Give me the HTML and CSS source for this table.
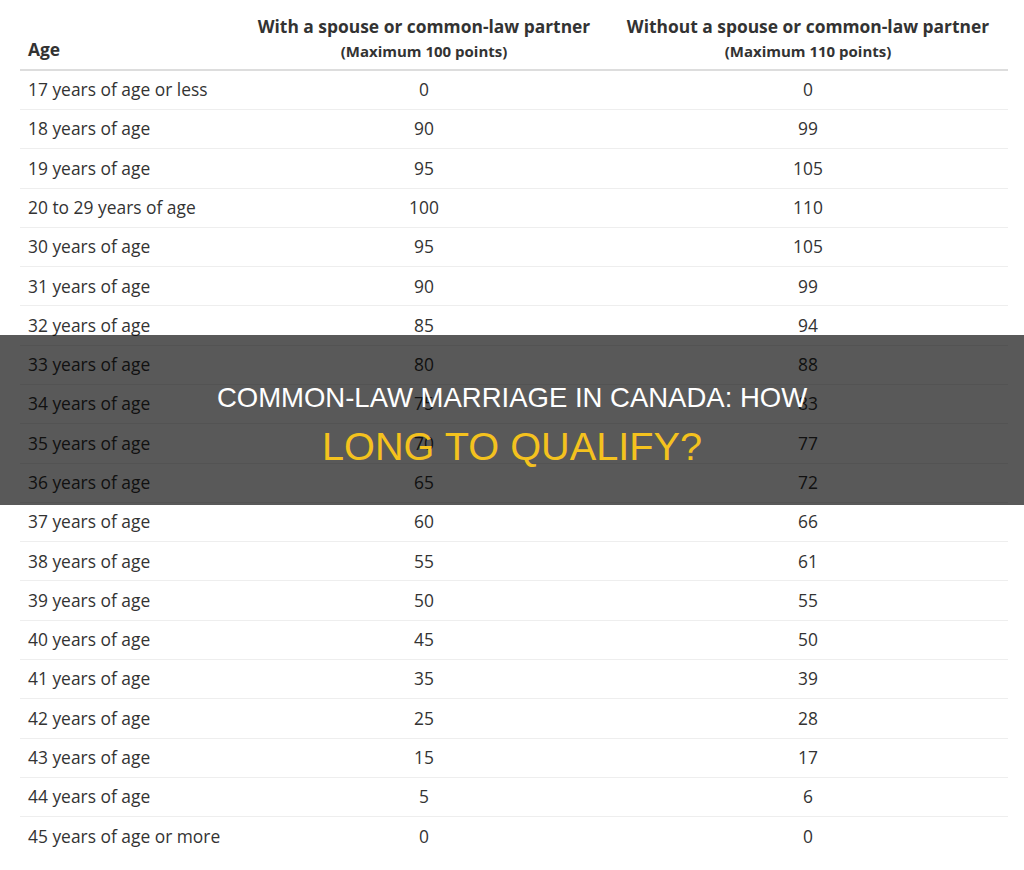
FILE: index.html
```html
<!DOCTYPE html>
<html lang="en">
<head>
<meta charset="utf-8">
<title>Common-Law Marriage In Canada: How Long To Qualify?</title>
<link rel="stylesheet" href="styles.css">
</head>
<body>
<table class="points">
  <thead>
    <tr>
      <th class="c-age">Age</th>
      <th class="c-with"><span class="h-main">With a spouse or common-law partner</span><span class="h-sub">(Maximum 100 points)</span></th>
      <th class="c-without"><span class="h-main">Without a spouse or common-law partner</span><span class="h-sub">(Maximum 110 points)</span></th>
    </tr>
  </thead>
  <tbody>
    <tr><td>17 years of age or less</td><td>0</td><td>0</td></tr>
    <tr><td>18 years of age</td><td>90</td><td>99</td></tr>
    <tr><td>19 years of age</td><td>95</td><td>105</td></tr>
    <tr><td>20 to 29 years of age</td><td>100</td><td>110</td></tr>
    <tr><td>30 years of age</td><td>95</td><td>105</td></tr>
    <tr><td>31 years of age</td><td>90</td><td>99</td></tr>
    <tr><td>32 years of age</td><td>85</td><td>94</td></tr>
    <tr><td>33 years of age</td><td>80</td><td>88</td></tr>
    <tr><td>34 years of age</td><td>75</td><td>83</td></tr>
    <tr><td>35 years of age</td><td>70</td><td>77</td></tr>
    <tr><td>36 years of age</td><td>65</td><td>72</td></tr>
    <tr><td>37 years of age</td><td>60</td><td>66</td></tr>
    <tr><td>38 years of age</td><td>55</td><td>61</td></tr>
    <tr><td>39 years of age</td><td>50</td><td>55</td></tr>
    <tr><td>40 years of age</td><td>45</td><td>50</td></tr>
    <tr><td>41 years of age</td><td>35</td><td>39</td></tr>
    <tr><td>42 years of age</td><td>25</td><td>28</td></tr>
    <tr><td>43 years of age</td><td>15</td><td>17</td></tr>
    <tr><td>44 years of age</td><td>5</td><td>6</td></tr>
    <tr><td>45 years of age or more</td><td>0</td><td>0</td></tr>
  </tbody>
</table>
<div class="banner">
  <h1 class="title">COMMON-LAW MARRIAGE IN CANADA: HOW <span class="hl">LONG TO QUALIFY?</span></h1>
</div>
</body>
</html>
```
FILE: styles.css
```css
html, body {
  margin: 0;
  padding: 0;
  background: #fff;
}
body {
  padding: 8px 16px 0 20px;
  font-family: "Open Sans", "Noto Sans", sans-serif;
  color: #333;
}
.points {
  width: 988px;
  border-collapse: collapse;
  table-layout: fixed;
  font-size: 17.4px;
  line-height: 25.5px;
}
.points th,
.points td {
  box-sizing: border-box;
}
.points th {
  font-weight: 700;
  padding: 6.4px 8px;
  border-bottom: 2px solid #ddd;
  vertical-align: bottom;
  text-align: center;
  color: #333;
}
.points th.c-age {
  text-align: left;
  width: 220px;
}
.points th.c-with { width: 368px; }
.points th.c-without { width: 400px; }
.h-main {
  display: block;
}
.h-sub {
  display: block;
  font-size: 15px;
  line-height: 22.5px;
}
.points td {
  padding: 6.4px 8px;
  border-bottom: 1px solid #eee;
  text-align: center;
}
.points td:first-child {
  text-align: left;
}
.points tbody tr:last-child td {
  border-bottom: none;
}
.banner {
  position: absolute;
  left: 0;
  right: 0;
  top: 335px;
  height: 170px;
  box-sizing: border-box;
  padding-top: 8px;
  background: rgba(0, 0, 0, 0.65);
  display: flex;
  align-items: center;
  justify-content: center;
}
.title {
  margin: 0;
  max-width: 640px;
  text-align: center;
  font-family: "Liberation Sans", Arial, sans-serif;
  font-weight: 400;
  font-size: 27.5px;
  line-height: 49px;
  color: #fff;
}
.hl {
  color: #f4c21e;
  font-size: 39.7px;
}
```
